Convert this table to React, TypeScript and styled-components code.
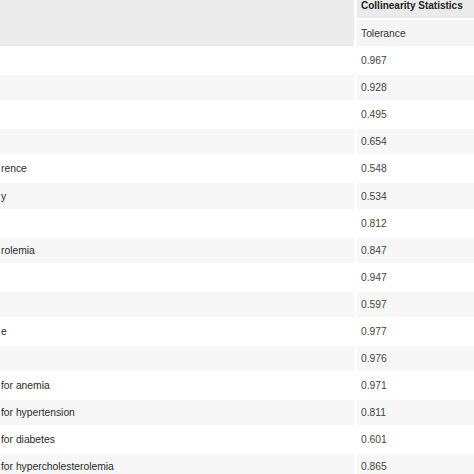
import React from "react";
import styled, { createGlobalStyle } from "styled-components";

const Global = createGlobalStyle`
  html, body { margin: 0; padding: 0; background: #ffffff; overflow: hidden; }
  body { font-family: "Liberation Sans", Arial, sans-serif; }
`;

const Table = styled.div`
  display: grid;
  grid-template-columns: 354px 1fr;
  grid-template-rows: 18px 26px;
  grid-auto-rows: 25.1px;
  column-gap: 3px;
  row-gap: 2px;
  width: 474px;
  height: 474px;
  overflow: hidden;
  align-content: start;
`;

const HeadBlank = styled.div`
  grid-row: 1 / span 2;
  background: #ebebeb;
`;

const GroupHead = styled.div`
  background: #ebebeb;
  font-weight: bold;
  font-size: 10px;
  line-height: 12px;
  color: #222;
  padding-left: 4px;
  display: flex;
  align-items: flex-start;
`;

const SubHead = styled.div`
  background: #f5f5f5;
  font-size: 10.3px;
  color: #333;
  padding-left: 4px;
  display: flex;
  align-items: center;
`;

const Cell = styled.div<{ $shade: boolean; $label?: boolean }>`
  background: ${(p) => (p.$shade ? "#f7f7f7" : "#ffffff")};
  font-size: 10.3px;
  color: ${(p) => (p.$label ? "#2a2a2a" : "#444")};
  padding-left: ${(p) => (p.$label ? "1px" : "4px")};
  display: flex;
  align-items: center;
  white-space: nowrap;
  overflow: hidden;
`;

const rows: [string, string][] = [
  ["", "0.967"],
  ["", "0.928"],
  ["", "0.495"],
  ["", "0.654"],
  ["rence", "0.548"],
  ["y", "0.534"],
  ["", "0.812"],
  ["rolemia", "0.847"],
  ["", "0.947"],
  ["", "0.597"],
  ["e", "0.977"],
  ["", "0.976"],
  ["for anemia", "0.971"],
  ["for hypertension", "0.811"],
  ["for diabetes", "0.601"],
  ["for hypercholesterolemia", "0.865"],
];

export default function App() {
  return (
    <>
      <Global />
      <Table>
        <HeadBlank />
        <GroupHead>Collinearity Statistics</GroupHead>
        <SubHead>Tolerance</SubHead>
        {rows.map(([label, value], i) => (
          <React.Fragment key={i}>
            <Cell $shade={i % 2 === 1} $label>
              {label}
            </Cell>
            <Cell $shade={i % 2 === 1}>{value}</Cell>
          </React.Fragment>
        ))}
      </Table>
    </>
  );
}
